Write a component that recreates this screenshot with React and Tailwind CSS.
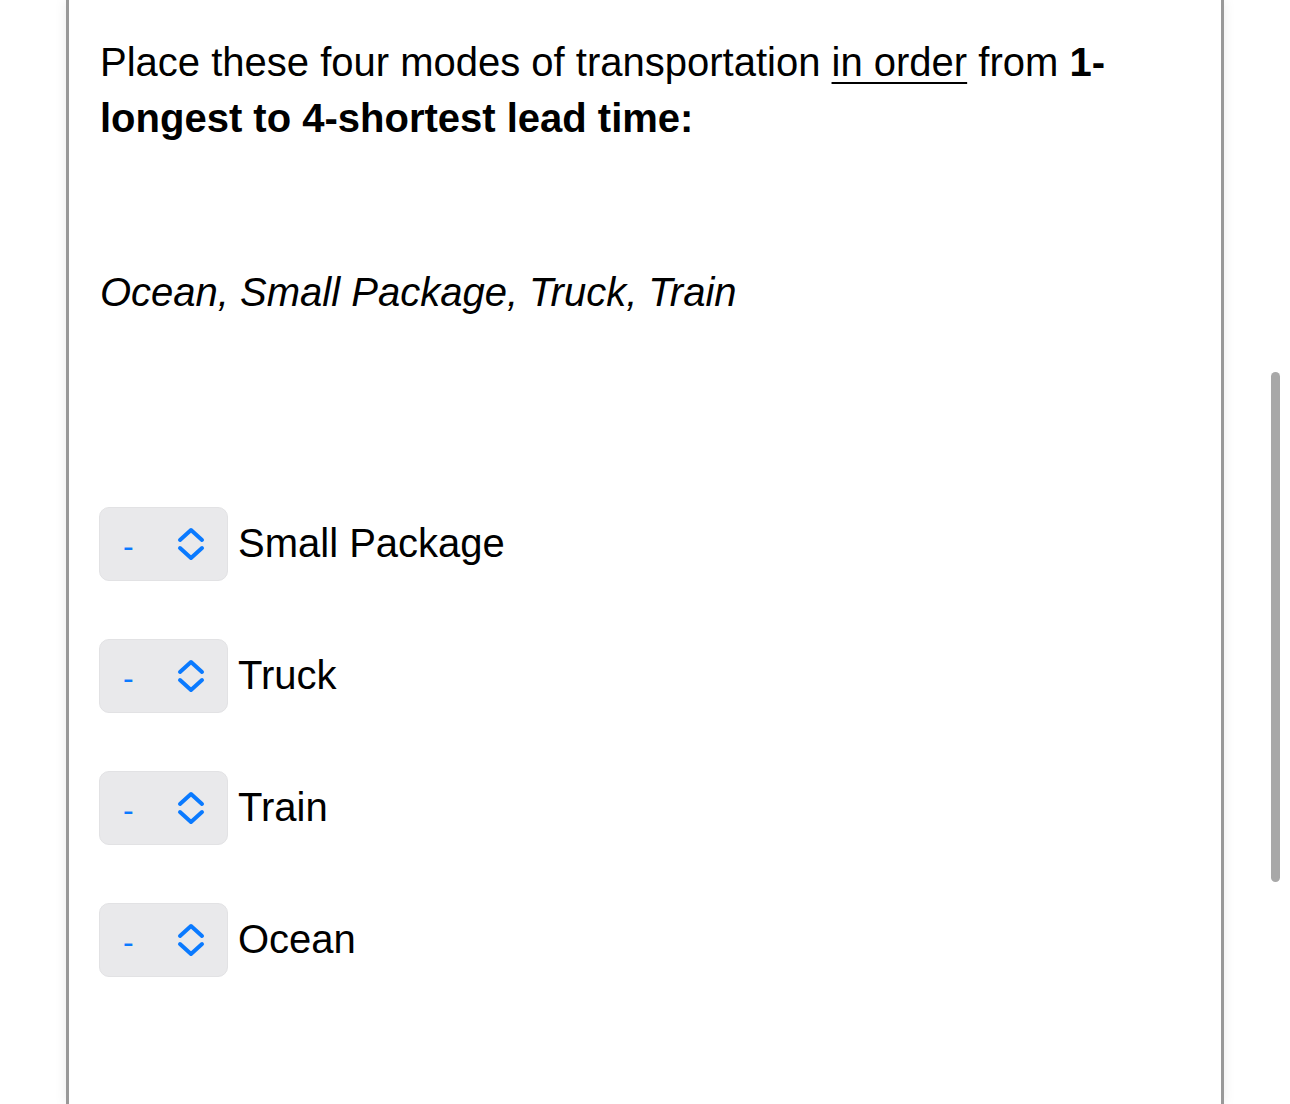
import React from "react";

const items = ["Small Package", "Truck", "Train", "Ocean"];

function Chevrons() {
  return (
    <svg width="30" height="38" viewBox="0 0 30 38" fill="none">
      <path d="M4 15 L15 5 L26 15" stroke="#0a7aff" strokeWidth="4" strokeLinecap="round" strokeLinejoin="round" />
      <path d="M4 23 L15 33 L26 23" stroke="#0a7aff" strokeWidth="4" strokeLinecap="round" strokeLinejoin="round" />
    </svg>
  );
}

export default function App() {
  return (
    <div
      className="w-[1290px] h-[1104px] overflow-hidden bg-white relative"
      style={{ fontFamily: '"Liberation Sans", Arial, sans-serif' }}
    >
      <div className="ml-[66px] w-[1158px] h-[1104px] border-x-[3px] border-[#999999] shadow-[0_0_12px_rgba(0,0,0,0.08)] bg-white pl-[31px] pt-[34px]">
        <p className="text-[40px] leading-[56px] text-black pr-[60px]">
          Place these four modes of transportation <span className="underline underline-offset-[6px] decoration-2">in order</span> from{" "}
          <b>1-longest to 4-shortest lead time:</b>
        </p>
        <p className="mt-[118px] text-[40px] leading-[56px] italic text-black">
          Ocean, Small Package, Truck, Train
        </p>
        <div className="mt-[187px] flex flex-col gap-[58px]">
          {items.map((it) => (
            <div key={it} className="flex items-center gap-[10px] ml-[-1px]">
              <div className="w-[129px] h-[74px] rounded-[10px] bg-[#e9e9eb] border border-[#e2e2e4] flex items-center pl-[23px] pr-[21px] justify-between">
                <span className="text-[32px] text-[#0a7aff] leading-none mt-[4px]">-</span>
                <Chevrons />
              </div>
              <span className="text-[40px] leading-[56px] text-black -mt-[3px]">{it}</span>
            </div>
          ))}
        </div>
      </div>
      <div className="absolute left-[1271px] top-[372px] w-[9px] h-[510px] rounded-full bg-[#a8a8a8]" />
    </div>
  );
}
